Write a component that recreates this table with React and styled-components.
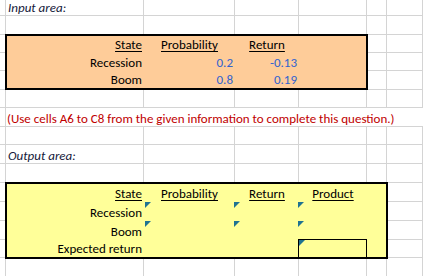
import React from 'react';
import styled, { createGlobalStyle } from 'styled-components';

const GlobalStyle = createGlobalStyle`
  html, body {
    margin: 0;
    padding: 0;
    background: #fff;
  }
  body {
    font-family: Carlito, Calibri, Lato, "Liberation Sans", sans-serif;
    font-size: 13px;
    color: #000;
  }
`;

const ROW_COUNT = 15;
const COL_COUNT = 7;

// areas of the sheet that are not plain empty cells
const covered = [
  { rows: [1, 1], cols: [2, 2] }, // Input area:
  { rows: [3, 5], cols: [2, 5] }, // input box
  { rows: [7, 7], cols: [2, 7] }, // note
  { rows: [9, 9], cols: [2, 2] }, // Output area:
  { rows: [11, 14], cols: [2, 6] }, // output box
];

const isCovered = (r, c) =>
  covered.some((a) => r >= a.rows[0] && r <= a.rows[1] && c >= a.cols[0] && c <= a.cols[1]);

const Sheet = styled.div`
  display: grid;
  grid-template-columns: 6px 138px 91px 64px 68px 20px 1fr;
  grid-template-rows: 16px 19px 18px 18px 19px 18px 19px 18px 19px 19px 19px 19px 19px 18px 19px;
  width: 423px;
  height: 276px;
  overflow: hidden;
`;

const GridCell = styled.div`
  grid-row: ${(p) => p.$row};
  grid-column: ${(p) => p.$col};
  border-right: ${(p) => (p.$open ? 'none' : '1px solid #d4d4d4')};
  border-bottom: 1px solid #d4d4d4;
  background: #fff;
`;

const TextCell = styled(GridCell)`
  display: flex;
  align-items: flex-end;
  padding: 0 0 0 ${(p) => p.$indent || 2}px;
  line-height: 15px;
  white-space: nowrap;
  overflow: visible;
  font-style: ${(p) => (p.$italic ? 'italic' : 'normal')};
  color: ${(p) => p.$color || '#000'};
`;

const Panel = styled.div`
  grid-row: ${(p) => p.$row};
  grid-column: ${(p) => p.$col};
  margin: -1px -1px ${(p) => p.$bottom}px -1px;
  border: 2px solid #000;
  background: ${(p) => p.$fill};
  display: grid;
  grid-template-columns: ${(p) => p.$cols};
  grid-template-rows: ${(p) => p.$rows};
`;

const Cell = styled.div`
  position: relative;
  display: flex;
  align-items: flex-end;
  justify-content: ${(p) =>
    p.$align === 'right' ? 'flex-end' : p.$align === 'center' ? 'center' : 'flex-start'};
  padding: 0 2px 1px;
  line-height: 15px;
  white-space: nowrap;
`;

const TotalCell = styled(Cell)`
  margin: -1px 0 0 -1px;
  border: 1px solid #000;
  border-bottom: none;
`;

const Head = styled.span`
  text-decoration: underline;
  text-underline-offset: 2px;
`;

const Value = styled.span`
  color: #2f62d0;
`;

const Marker = styled.span`
  position: absolute;
  top: 0;
  left: ${(p) => p.$x || 0}px;
  width: 0;
  height: 0;
  border-top: 6px solid #1f7391;
  border-right: 6px solid transparent;
`;

const inputRows = [
  { state: 'Recession', prob: '0.2', ret: '-0.13' },
  { state: 'Boom', prob: '0.8', ret: '0.19' },
];

function InputBox() {
  return (
    <Panel
      $row="3 / 6"
      $col="2 / 6"
      $bottom={0}
      $fill="#fecc99"
      $cols="137px 91px 64px 1fr"
      $rows="17px 18px 1fr"
    >
      <Cell $align="right">
        <Head>State</Head>
      </Cell>
      <Cell $align="center">
        <Head>Probability</Head>
      </Cell>
      <Cell $align="center">
        <Head>Return</Head>
      </Cell>
      <Cell />
      {inputRows.map((row) => (
        <React.Fragment key={row.state}>
          <Cell $align="right">{row.state}</Cell>
          <Cell $align="right">
            <Value>{row.prob}</Value>
          </Cell>
          <Cell $align="right">
            <Value>{row.ret}</Value>
          </Cell>
          <Cell />
        </React.Fragment>
      ))}
    </Panel>
  );
}

function OutputBox() {
  return (
    <Panel
      $row="11 / 15"
      $col="2 / 7"
      $bottom={-1}
      $fill="#ffff99"
      $cols="137px 91px 64px 68px 1fr"
      $rows="18px 19px 19px 1fr"
    >
      <Cell $align="right">
        <Head>State</Head>
      </Cell>
      <Cell $align="center">
        <Head>Probability</Head>
      </Cell>
      <Cell $align="center">
        <Head>Return</Head>
      </Cell>
      <Cell $align="center">
        <Head>Product</Head>
      </Cell>
      <Cell />
      {['Recession', 'Boom'].map((state) => (
        <React.Fragment key={state}>
          <Cell $align="right">{state}</Cell>
          <Cell>
            <Marker $x={1} />
          </Cell>
          <Cell>
            <Marker $x={-1} />
          </Cell>
          <Cell>
            <Marker $x={-1} />
          </Cell>
          <Cell />
        </React.Fragment>
      ))}
      <Cell $align="right">Expected return</Cell>
      <Cell />
      <Cell />
      <TotalCell>
        <Marker />
      </TotalCell>
      <Cell />
    </Panel>
  );
}

export default function App() {
  const blanks = [];
  for (let r = 1; r <= ROW_COUNT; r++) {
    for (let c = 1; c <= COL_COUNT; c++) {
      if (!isCovered(r, c)) blanks.push(<GridCell key={`${r}-${c}`} $row={r} $col={c} />);
    }
  }

  return (
    <>
      <GlobalStyle />
      <Sheet>
        {blanks}
        <TextCell $row={1} $col={2} $italic $color="#15193a">
          Input area:
        </TextCell>
        <TextCell $row={7} $col="2 / 8" $open $indent={1} $color="#c00000">
          (Use cells A6 to C8 from the given information to complete this question.)
        </TextCell>
        <TextCell $row={9} $col={2} $italic $color="#15193a">
          Output area:
        </TextCell>
        <InputBox />
        <OutputBox />
      </Sheet>
    </>
  );
}
